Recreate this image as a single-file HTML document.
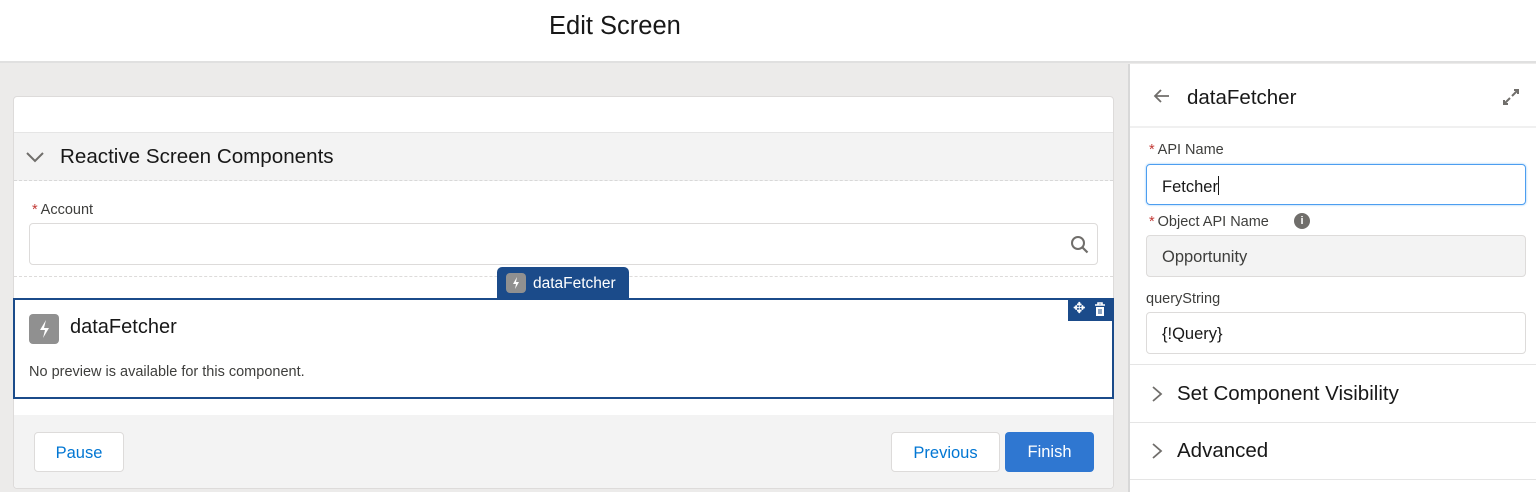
<!DOCTYPE html>
<html><head><style>
*{box-sizing:border-box;margin:0;padding:0}
body{width:1536px;height:492px;overflow:hidden;background:#ecebea;font-family:"Liberation Sans",sans-serif;color:#181818;position:relative}
.a{position:absolute}
.req{color:#c23934;margin-right:3px}
</style></head><body>
<div class="a" style="left:0;top:0;width:1536px;height:63px;background:#fff;border-bottom:2px solid #e0e0e0"></div>
<div class="a" style="left:549px;top:12px;font-size:25.5px">Edit Screen</div>

<div class="a" style="left:13px;top:96px;width:1101px;height:393px;background:#fff;border:1px solid #dddbda;border-radius:4px"></div>
<div class="a" style="left:14px;top:132px;width:1099px;height:49px;background:#f3f3f3;border-top:1px solid #e5e5e5;border-bottom:1px dashed #d8d8d8"></div>
<svg class="a" style="left:25px;top:150px" width="20" height="14"><path d="M2 3l8 8 8-8" fill="none" stroke="#706e6b" stroke-width="2"/></svg>
<div class="a" style="left:60px;top:145px;font-size:20.6px">Reactive Screen Components</div>
<div class="a" style="left:32px;top:202px;font-size:14.5px;color:#3e3e3c"><span class="req">*</span>Account</div>
<div class="a" style="left:29px;top:223px;width:1069px;height:42px;border:1px solid #dddbda;border-radius:4px"></div>
<svg class="a" style="left:1070px;top:235px" width="20" height="20"><circle cx="8" cy="8" r="6" fill="none" stroke="#706e6b" stroke-width="2"/><path d="M12.5 12.5l5 5" stroke="#706e6b" stroke-width="2.2"/></svg>
<div class="a" style="left:14px;top:276px;width:1099px;border-top:1px dashed #dddbda"></div>
<div class="a" style="left:497px;top:267px;width:132px;height:32px;background:#1b4b8a;border-radius:5px 5px 0 0"></div>
<div class="a" style="left:506px;top:273px;width:20px;height:20px;background:#909090;border-radius:4px"></div>
<svg class="a" style="left:506px;top:273px" width="20" height="20"><path d="M11 4L7 11h3l-1 5 4-7h-3z" fill="#fff"/></svg>
<div class="a" style="left:533px;top:275px;font-size:15.5px;color:#fff">dataFetcher</div>
<div class="a" style="left:13px;top:298px;width:1101px;height:101px;border:2px solid #1b4b8a;background:#fff"></div>
<div class="a" style="left:1068px;top:300px;width:44px;height:21px;background:#1b4b8a"></div>
<div class="a" style="left:1073px;top:299px;font-size:15px;color:#fff">✥</div>
<svg class="a" style="left:1093px;top:302px" width="14" height="16"><path d="M2 3h10M5 3V1h4v2" stroke="#fff" stroke-width="1.6" fill="none"/><rect x="3" y="5" width="8" height="9" fill="#fff"/><path d="M6 7v5M8 7v5" stroke="#1b4b8a" stroke-width="1"/></svg>
<div class="a" style="left:29px;top:314px;width:30px;height:30px;background:#909090;border-radius:4px"></div>
<svg class="a" style="left:29px;top:314px" width="30" height="30"><path d="M17 6l-6 10h5l-2 8 6-10h-5z" fill="#fff"/></svg>
<div class="a" style="left:70px;top:316px;font-size:20px">dataFetcher</div>
<div class="a" style="left:29px;top:364px;font-size:14.5px;color:#3e3e3c">No preview is available for this component.</div>
<div class="a" style="left:14px;top:415px;width:1099px;height:73px;background:#f3f3f3;border-radius:0 0 4px 4px"></div>
<div class="a" style="left:34px;top:432px;width:90px;height:40px;background:#fff;border:1px solid #dddbda;border-radius:4px;color:#0176d3;font-size:16.5px;text-align:center;line-height:40px">Pause</div>
<div class="a" style="left:891px;top:432px;width:109px;height:40px;background:#fff;border:1px solid #dddbda;border-radius:4px;color:#0176d3;font-size:16.5px;text-align:center;line-height:40px">Previous</div>
<div class="a" style="left:1005px;top:432px;width:89px;height:40px;background:#2f77d1;border-radius:4px;color:#fff;font-size:16.5px;text-align:center;line-height:41px">Finish</div>

<div class="a" style="left:1128px;top:64px;width:2px;height:428px;background:#d8d8d8"></div>
<div class="a" style="left:1130px;top:64px;width:406px;height:428px;background:#fff"></div>
<svg class="a" style="left:1152px;top:88px" width="20" height="16"><path d="M17 8H3M9 2L3 8l6 6" fill="none" stroke="#706e6b" stroke-width="1.8"/></svg>
<div class="a" style="left:1187px;top:86px;font-size:20.5px">dataFetcher</div>
<svg class="a" style="left:1501px;top:87px" width="20" height="20"><path d="M11 9l6-6M13 3h4v4M9 11l-6 6M3 13v4h4" fill="none" stroke="#706e6b" stroke-width="2"/></svg>
<div class="a" style="left:1130px;top:126px;width:406px;border-top:2px solid #f0f0f0"></div>
<div class="a" style="left:1149px;top:142px;font-size:14.5px;color:#3e3e3c"><span class="req">*</span>API Name</div>
<div class="a" style="left:1146px;top:164px;width:380px;height:41px;border:1px solid #4c9ef0;border-radius:4px;box-shadow:0 0 2px #8ec5f7;font-size:16.5px;padding:11px 15px">Fetcher<span style="display:inline-block;width:1px;height:19px;background:#181818;vertical-align:-3px"></span></div>
<div class="a" style="left:1149px;top:214px;font-size:14.5px;color:#3e3e3c"><span class="req">*</span>Object API Name</div>
<div class="a" style="left:1294px;top:213px;width:16px;height:16px;border-radius:50%;background:#706e6b;color:#fff;font-size:11px;font-weight:bold;text-align:center;line-height:16px">i</div>
<div class="a" style="left:1146px;top:235px;width:380px;height:42px;background:#f3f3f3;border:1px solid #dddbda;border-radius:4px;font-size:16.5px;padding:12px 15px;color:#3e3e3c">Opportunity</div>
<div class="a" style="left:1146px;top:291px;font-size:14.5px;color:#3e3e3c">queryString</div>
<div class="a" style="left:1146px;top:312px;width:380px;height:42px;border:1px solid #dddbda;border-radius:4px;font-size:16.5px;padding:12px 15px">{!Query}</div>
<div class="a" style="left:1130px;top:364px;width:406px;border-top:1px solid #e5e5e5"></div>
<svg class="a" style="left:1150px;top:384px" width="14" height="20"><path d="M3 3l8 7-8 7" fill="none" stroke="#706e6b" stroke-width="1.8"/></svg>
<div class="a" style="left:1177px;top:382px;font-size:20.5px">Set Component Visibility</div>
<div class="a" style="left:1130px;top:422px;width:406px;border-top:1px solid #e5e5e5"></div>
<svg class="a" style="left:1150px;top:441px" width="14" height="20"><path d="M3 3l8 7-8 7" fill="none" stroke="#706e6b" stroke-width="1.8"/></svg>
<div class="a" style="left:1177px;top:439px;font-size:20.5px">Advanced</div>
<div class="a" style="left:1130px;top:479px;width:406px;border-top:1px solid #e5e5e5"></div>
</body></html>
